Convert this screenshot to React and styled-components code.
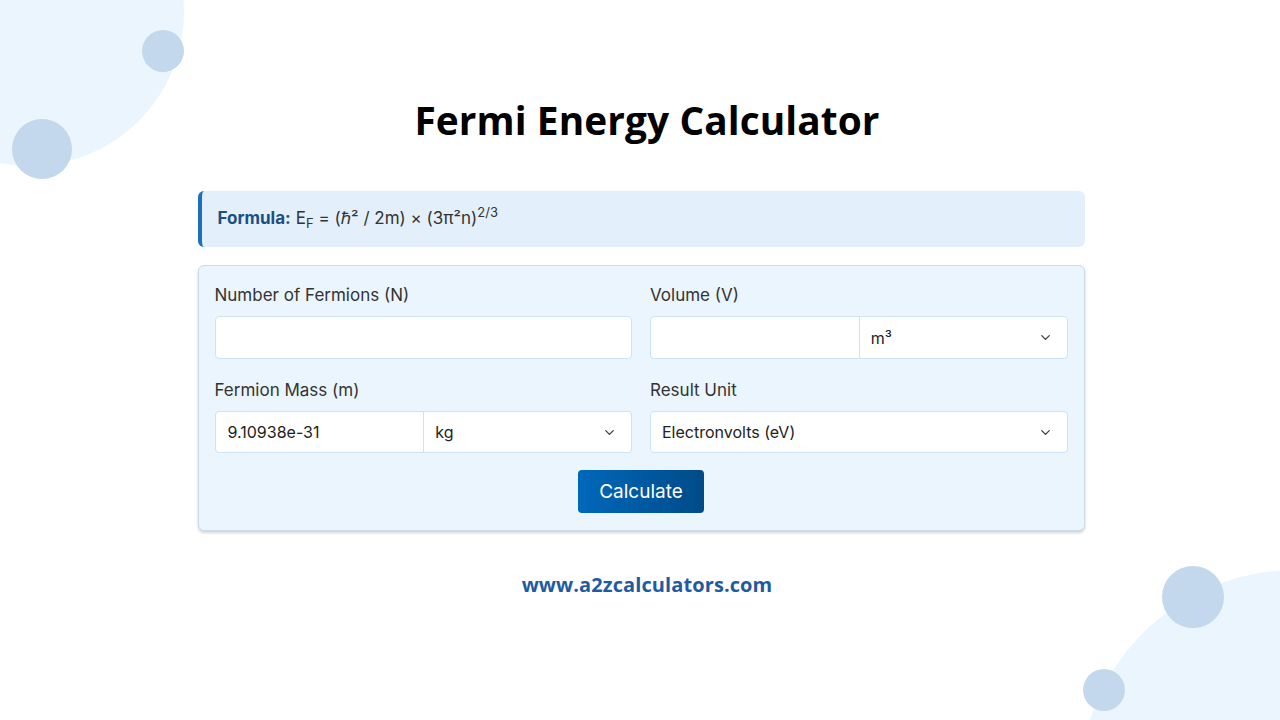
import React from 'react';
import styled, { createGlobalStyle } from 'styled-components';

const GlobalStyle = createGlobalStyle`
  * { box-sizing: border-box; }
  html, body { margin: 0; padding: 0; }
  body {
    width: 1280px;
    height: 720px;
    overflow: hidden;
    background: #fff;
    font-family: Inter, "Noto Sans", sans-serif;
  }
`;

const Page = styled.div`
  position: relative;
  width: 1280px;
  height: 720px;
  overflow: hidden;
  display: flex;
  flex-direction: column;
  align-items: center;
  padding-top: 94px;
`;

/* decorative bubbles in the corners */
const Blob = styled.div`
  position: absolute;
  border-radius: 50%;
  background: ${(p) => (p.$dark ? '#c3d8ec' : '#eaf5fe')};
  left: ${(p) => p.$x - p.$r}px;
  top: ${(p) => p.$y - p.$r}px;
  width: ${(p) => p.$r * 2}px;
  height: ${(p) => p.$r * 2}px;
`;

const Title = styled.h1`
  position: relative;
  margin: 0 0 0 14px;
  font-family: "Open Sans", sans-serif;
  font-weight: 700;
  font-size: 38.8px;
  line-height: 52px;
  color: #000;
  letter-spacing: 0.1px;
`;

const Main = styled.div`
  position: relative;
  width: 887px;
  margin: 45px 0 0 2px;
  display: flex;
  flex-direction: column;
  gap: 18px;
`;

const FormulaBox = styled.div`
  height: 56px;
  display: flex;
  align-items: center;
  padding: 0 0 2px 16px;
  background: #e3f0fb;
  border-left: 4px solid #1a6fbf;
  border-radius: 6px;
  font-size: 17px;
  color: #333;
`;

const FormulaLabel = styled.strong`
  color: #1b4f7e;
  font-weight: 700;
  margin-right: 5px;
`;

const Card = styled.div`
  background: #ebf5fe;
  border: 1px solid #c8dcec;
  border-radius: 6px;
  box-shadow: 0 2px 3px rgba(0, 0, 0, 0.18);
  padding: 18px 16px 17px;
  display: flex;
  flex-direction: column;
  align-items: center;
`;

const Grid = styled.div`
  width: 100%;
  display: grid;
  grid-template-columns: 1fr 1fr;
  column-gap: 18px;
  row-gap: 20px;
`;

const Field = styled.div`
  display: flex;
  flex-direction: column;
  gap: 10px;
`;

const Label = styled.label`
  font-size: 17px;
  line-height: 22px;
  color: #333;
`;

const Control = styled.div`
  height: ${(p) => p.$h}px;
  display: flex;
  background: #fff;
  border: 1px solid #cde2f4;
  border-radius: 4px;
  overflow: hidden;
`;

const Input = styled.div`
  flex: 0 0 50%;
  display: flex;
  align-items: center;
  padding-left: 12px;
  font-size: 16px;
  color: #222;
`;

const Select = styled.div`
  flex: 1 1 0;
  display: flex;
  align-items: center;
  justify-content: space-between;
  padding: 0 14px 0 11px;
  font-size: 16px;
  color: #222;
  border-left: ${(p) => (p.$split ? '1px solid #cde2f4' : 'none')};
`;

const Button = styled.button`
  margin-top: 17px;
  width: 126px;
  height: 43px;
  border: none;
  border-radius: 4px;
  background: linear-gradient(90deg, #0068bb, #004b88);
  color: #fff;
  font-family: Inter, sans-serif;
  font-size: 19px;
`;

const Footer = styled.div`
  position: relative;
  margin: 40px 0 0 14px;
  font-family: "Open Sans", sans-serif;
  font-weight: 700;
  font-size: 20px;
  letter-spacing: 0.1px;
  color: #1f5ba1;
`;

const Chevron = () => (
  <svg width="15" height="15" viewBox="0 0 24 24" fill="none" stroke="#444" strokeWidth="2.2" strokeLinecap="round" strokeLinejoin="round">
    <path d="M6 9l6 6 6-6" />
  </svg>
);

export default function App() {
  return (
    <Page>
      <GlobalStyle />
      <Blob $x={30} $y={12} $r={154} />
      <Blob $dark $x={163} $y={51} $r={21} />
      <Blob $dark $x={42} $y={149} $r={30} />
      <Blob $x={1295} $y={785} $r={215} />
      <Blob $dark $x={1193} $y={597} $r={31} />
      <Blob $dark $x={1104} $y={690} $r={21} />

      <Title>Fermi Energy Calculator</Title>

      <Main>
        <FormulaBox>
          <FormulaLabel>Formula:</FormulaLabel>
          <span>
            E<sub style={{ fontSize: 13 }}>F</sub> = (ℏ² / 2m) × (3π²n)<sup style={{ fontSize: 13 }}>2/3</sup>
          </span>
        </FormulaBox>

        <Card>
          <Grid>
            <Field>
              <Label>Number of Fermions (N)</Label>
              <Control $h={43}>
                <Input />
              </Control>
            </Field>
            <Field>
              <Label>Volume (V)</Label>
              <Control $h={43}>
                <Input />
                <Select $split>
                  <span>m³</span>
                  <Chevron />
                </Select>
              </Control>
            </Field>
            <Field>
              <Label>Fermion Mass (m)</Label>
              <Control $h={42}>
                <Input>9.10938e-31</Input>
                <Select $split>
                  <span>kg</span>
                  <Chevron />
                </Select>
              </Control>
            </Field>
            <Field>
              <Label>Result Unit</Label>
              <Control $h={42}>
                <Select>
                  <span>Electronvolts (eV)</span>
                  <Chevron />
                </Select>
              </Control>
            </Field>
          </Grid>
          <Button>Calculate</Button>
        </Card>
      </Main>

      <Footer>www.a2zcalculators.com</Footer>
    </Page>
  );
}
